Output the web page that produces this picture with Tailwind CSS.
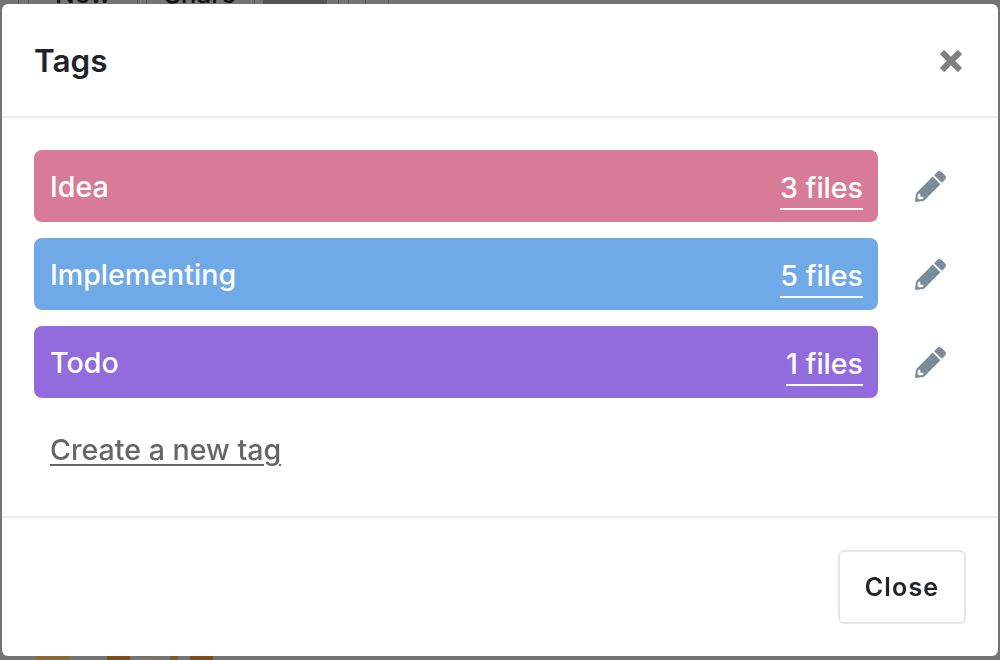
<!DOCTYPE html>
<html lang="en">
<head>
    <meta charset="UTF-8">
    <title>Tags</title>
    <script src="https://cdn.jsdelivr.net/npm/@tailwindcss/browser@4"></script>
</head>
<body class="w-[1000px] h-[660px] overflow-hidden bg-[#757575] font-['Inter',sans-serif]">

    <!-- Page behind the modal -->
    <div class="h-[660px] flex flex-col justify-between">
        <div class="flex pl-[18px] h-[4px] overflow-hidden text-[26px] font-medium leading-[8px] text-[#111]">
            <div class="w-[10px] border-l border-[#555]"></div>
            <div class="w-[109px] pl-[26px] border-l border-[#555]"><span class="block -mt-[10px]">New</span></div>
            <div class="w-[9px] border-l border-[#555]"></div>
            <div class="w-[108px] pl-[17px] border-l border-[#555]"><span class="block -mt-[10px]">Share</span></div>
            <div class="w-[9px] border-l border-[#555]"></div>
            <div class="w-[64px] bg-[#555]"></div>
            <div class="w-[11px]"></div>
            <div class="w-[10px] border-l border-[#555]"></div>
            <div class="w-[17px] border-l border-[#555]"></div>
            <div class="w-[23px] border-l border-[#555]"></div>
            <div class="w-[10px] border-l border-[#555]"></div>
        </div>
        <div class="flex pl-[35px] h-[4px] overflow-hidden">
            <div class="w-[35px] bg-[#8a6a3a]"></div>
            <div class="w-[37px]"></div>
            <div class="w-[23px] bg-[#7a4f1c]"></div>
            <div class="w-[10px]"></div>
            <div class="w-[15px] border-t border-[#8a6a3a]"></div>
            <div class="w-[15px]"></div>
            <div class="w-[8px] bg-[#7a5a2a]"></div>
            <div class="w-[12px]"></div>
            <div class="w-[23px] bg-[#7a4f1c]"></div>
        </div>
    </div>

    <!-- Modal -->
    <div class="fixed left-[2px] top-[4px] w-[996px] h-[652px] bg-white rounded-[6px] flex flex-col">
        <div class="h-[114px] flex items-center justify-between pl-[32px] pr-[36px] border-b-2 border-[#ebebf0]">
            <h2 class="mt-[2px] text-[31.5px] font-semibold text-[#212529]">Tags</h2>
            <svg class="mt-[2px] w-[22px] h-[22px]" viewBox="0 0 22 22" fill="none" stroke="#808080" stroke-width="6">
                <path d="M2 2 20 20M20 2 2 20"/>
            </svg>
        </div>

        <div class="h-[398px] pl-[32px] pr-[52px] pt-[32px] flex flex-col gap-[16px]">
            <div class="flex items-center gap-[37px]">
                <div class="flex-1 h-[72px] rounded-[8px] bg-[#d87b98] pl-[16px] pr-[15px] flex items-center justify-between text-white text-[28.6px] font-[450]">
                    <span class="mt-[3px]">Idea</span>
                    <span class="mt-[5px] border-b-2 border-white leading-[40px]">3 files</span>
                </div>
                <svg class="w-[31px] h-[31px]" viewBox="0 0 512 512" fill="#7b8d9b">
                    <path d="M497.9 142.1l-46.1 46.1c-4.7 4.7-12.3 4.7-17 0l-111-111c-4.7-4.7-4.7-12.3 0-17l46.1-46.1c18.7-18.7 49.1-18.7 67.9 0l60.1 60.1c18.8 18.7 18.8 49.1 0 67.9zM284.2 99.8L21.6 362.4.4 483.9c-2.9 16.4 11.4 30.6 27.8 27.8l121.5-21.3 262.6-262.6c4.7-4.7 4.7-12.3 0-17l-111-111c-4.8-4.7-12.4-4.7-17.1 0zM88 424h48v36.3l-64.5 11.3-31.1-31.1L51.7 376H88v48z"/>
                </svg>
            </div>
            <div class="flex items-center gap-[37px]">
                <div class="flex-1 h-[72px] rounded-[8px] bg-[#6fa9e8] pl-[16px] pr-[15px] flex items-center justify-between text-white text-[28.6px] font-[450]">
                    <span class="mt-[3px]">Implementing</span>
                    <span class="mt-[5px] border-b-2 border-white leading-[40px]">5 files</span>
                </div>
                <svg class="w-[31px] h-[31px]" viewBox="0 0 512 512" fill="#7b8d9b">
                    <path d="M497.9 142.1l-46.1 46.1c-4.7 4.7-12.3 4.7-17 0l-111-111c-4.7-4.7-4.7-12.3 0-17l46.1-46.1c18.7-18.7 49.1-18.7 67.9 0l60.1 60.1c18.8 18.7 18.8 49.1 0 67.9zM284.2 99.8L21.6 362.4.4 483.9c-2.9 16.4 11.4 30.6 27.8 27.8l121.5-21.3 262.6-262.6c4.7-4.7 4.7-12.3 0-17l-111-111c-4.8-4.7-12.4-4.7-17.1 0zM88 424h48v36.3l-64.5 11.3-31.1-31.1L51.7 376H88v48z"/>
                </svg>
            </div>
            <div class="flex items-center gap-[37px]">
                <div class="flex-1 h-[72px] rounded-[8px] bg-[#926bdc] pl-[16px] pr-[15px] flex items-center justify-between text-white text-[28.6px] font-[450]">
                    <span class="mt-[3px]">Todo</span>
                    <span class="mt-[5px] border-b-2 border-white leading-[40px]">1 files</span>
                </div>
                <svg class="w-[31px] h-[31px]" viewBox="0 0 512 512" fill="#7b8d9b">
                    <path d="M497.9 142.1l-46.1 46.1c-4.7 4.7-12.3 4.7-17 0l-111-111c-4.7-4.7-4.7-12.3 0-17l46.1-46.1c18.7-18.7 49.1-18.7 67.9 0l60.1 60.1c18.8 18.7 18.8 49.1 0 67.9zM284.2 99.8L21.6 362.4.4 483.9c-2.9 16.4 11.4 30.6 27.8 27.8l121.5-21.3 262.6-262.6c4.7-4.7 4.7-12.3 0-17l-111-111c-4.8-4.7-12.4-4.7-17.1 0zM88 424h48v36.3l-64.5 11.3-31.1-31.1L51.7 376H88v48z"/>
                </svg>
            </div>
            <a href="#" class="pl-[16px] pt-[15px] text-[28.6px] font-[450] leading-[42px] text-[#666] underline underline-offset-[4px] decoration-2">Create a new tag</a>
        </div>

        <div class="flex-1 border-t-2 border-[#ebebf0] flex items-start justify-end pt-[32px] pr-[32px]">
            <button class="w-[128px] h-[74px] pt-[2px] bg-white border-2 border-[#e4e6ee] rounded-[6px] text-[25px] font-semibold tracking-[1.2px] text-[#212529]">Close</button>
        </div>
    </div>
</body>
</html>
